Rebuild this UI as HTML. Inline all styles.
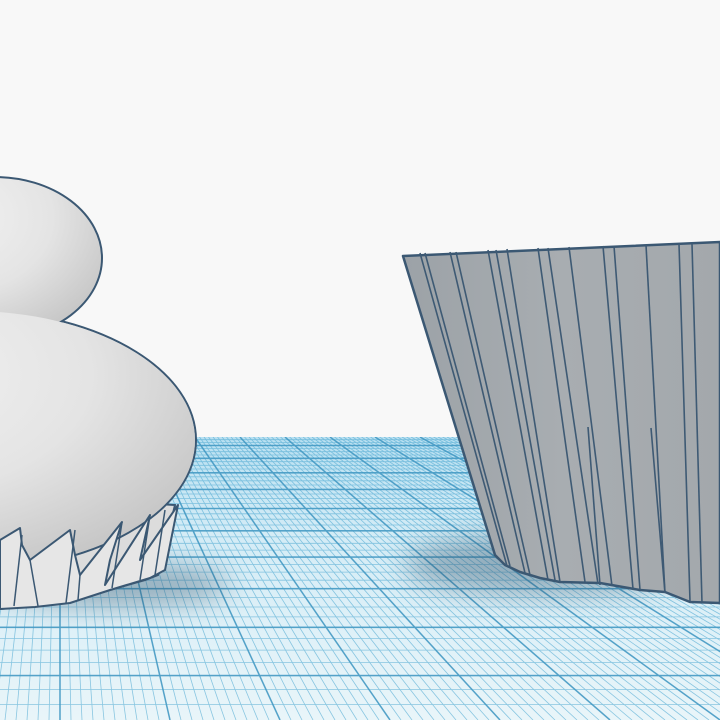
<!DOCTYPE html>
<html><head><style>
html,body{margin:0;padding:0;width:720px;height:720px;overflow:hidden;background:#f8f8f8}
svg{display:block}
</style></head><body>
<svg width="720" height="720" viewBox="0 0 720 720" xmlns="http://www.w3.org/2000/svg">
<defs>
<linearGradient id="floor" x1="0" y1="0" x2="0" y2="1">
<stop offset="0" stop-color="#b9e0f1"/><stop offset="0.35" stop-color="#d4ecf6"/><stop offset="1" stop-color="#e9f5f9"/>
</linearGradient>
<radialGradient id="ballA" cx="0.3" cy="0.25" r="0.85">
<stop offset="0" stop-color="#f2f2f2"/><stop offset="0.55" stop-color="#e4e4e4"/><stop offset="1" stop-color="#c4c4c4"/>
</radialGradient>
<linearGradient id="cup" x1="0" y1="0" x2="1" y2="0">
<stop offset="0" stop-color="#9ca2a7"/><stop offset="0.5" stop-color="#a8adb1"/><stop offset="1" stop-color="#a3a8ac"/>
</linearGradient>
<filter id="blur" x="-50%" y="-50%" width="200%" height="200%"><feGaussianBlur stdDeviation="14"/></filter>
<clipPath id="fc"><rect x="0" y="437" width="720" height="283"/></clipPath>
</defs>
<rect width="720" height="720" fill="#f8f8f8"/>
<rect x="0" y="437" width="720" height="283" fill="url(#floor)"/>
<g clip-path="url(#fc)" fill="none" stroke="#4aa6d0">
<path stroke-width="0.8" stroke-opacity="0.6" d="M0 720.6H720M0 704.6H720M0 689.6H720M0 675.6H720M0 662.5H720M0 650.1H720M0 638.4H720M0 627.3H720M0 616.9H720M0 607H720M0 597.6H720M0 588.7H720M0 580.2H720M0 572.1H720M0 564.4H720M0 557.1H720M0 550.1H720M0 543.3H720M0 536.9H720M0 530.8H720M0 525H720M0 519.2H720M0 513.8H720M0 508.5H720M0 503.5H720M0 498.6H720M0 494H720M0 489.4H720M0 485H720M0 480.8H720M0 476.8H720M0 472.8H720M0 469H720M0 465.3H720M0 461.7H720M0 458.3H720M0 455H720M0 451.7H720M0 448.6H720M0 445.5H720M0 442.6H720M0 439.7H720
M1.5 437L-83 720M6 437L-72 720M10.5 437L-61 720M15 437L-50 720M19.5 437L-39 720M24 437L-28 720M28.5 437L-17 720M33 437L-6 720M37.5 437L5 720M42 437L16 720M46.5 437L27 720M51 437L38 720M55.5 437L49 720M60 437L60 720
M64.5 437L71 720M69 437L82 720M73.5 437L93 720M78 437L104 720M82.5 437L115 720M87 437L126 720M91.5 437L137 720M96 437L148 720M100.5 437L159 720M105 437L170 720M109.5 437L181 720M114 437L192 720M118.5 437L203 720M123 437L214 720M127.5 437L225 720M132 437L236 720M136.5 437L247 720M141 437L258 720M145.5 437L269 720M150 437L280 720M154.5 437L291 720M159 437L302 720M163.5 437L313 720M168 437L324 720M172.5 437L335 720M177 437L346 720M181.5 437L357 720M186 437L368 720M190.5 437L379 720M195 437L390 720M199.5 437L401 720M204 437L412 720M208.5 437L423 720M213 437L434 720M217.5 437L445 720M222 437L456 720M226.5 437L467 720M231 437L478 720M235.5 437L489 720M240 437L500 720M244.5 437L511 720M249 437L522 720M253.5 437L533 720M258 437L544 720M262.5 437L555 720M267 437L566 720M271.5 437L577 720M276 437L588 720M280.5 437L599 720M285 437L610 720M289.5 437L621 720M294 437L632 720M298.5 437L643 720M303 437L654 720M307.5 437L665 720M312 437L676 720M316.5 437L687 720M321 437L698 720M325.5 437L709 720M330 437L720 720M334.5 437L731 720M339 437L742 720M343.5 437L753 720M348 437L764 720M352.5 437L775 720M357 437L786 720M361.5 437L797 720M366 437L808 720M370.5 437L819 720M375 437L830 720M379.5 437L841 720M384 437L852 720M388.5 437L863 720M393 437L874 720M397.5 437L885 720M402 437L896 720M406.5 437L907 720M411 437L918 720M415.5 437L929 720M420 437L940 720M424.5 437L951 720M429 437L962 720M433.5 437L973 720M438 437L984 720M442.5 437L995 720M447 437L1006 720M451.5 437L1017 720M456 437L1028 720M460.5 437L1039 720M465 437L1050 720M469.5 437L1061 720M474 437L1072 720M478.5 437L1083 720M483 437L1094 720M487.5 437L1105 720M492 437L1116 720M496.5 437L1127 720M501 437L1138 720M505.5 437L1149 720M510 437L1160 720M514.5 437L1171 720M519 437L1182 720M523.5 437L1193 720M528 437L1204 720M532.5 437L1215 720M537 437L1226 720M541.5 437L1237 720M546 437L1248 720M550.5 437L1259 720M555 437L1270 720M559.5 437L1281 720M564 437L1292 720M568.5 437L1303 720M573 437L1314 720M577.5 437L1325 720M582 437L1336 720M586.5 437L1347 720M591 437L1358 720M595.5 437L1369 720M600 437L1380 720M604.5 437L1391 720M609 437L1402 720M613.5 437L1413 720M618 437L1424 720M622.5 437L1435 720M627 437L1446 720M631.5 437L1457 720M636 437L1468 720M640.5 437L1479 720M645 437L1490 720M649.5 437L1501 720M654 437L1512 720M658.5 437L1523 720M663 437L1534 720M667.5 437L1545 720M672 437L1556 720M676.5 437L1567 720M681 437L1578 720M685.5 437L1589 720M690 437L1600 720M694.5 437L1611 720M699 437L1622 720M703.5 437L1633 720M708 437L1644 720M712.5 437L1655 720M717 437L1666 720M721.5 437L1677 720"/>
<path stroke-width="1.6" stroke-opacity="0.75" stroke="#3b93bf" d="M0 675.6H720M0 627.3H720M0 588.7H720M0 557.1H720M0 530.8H720M0 508.5H720M0 489.4H720M0 472.8H720M0 458.3H720M0 445.5H720
M15 437L-50 720M60 437L60 720M105 437L170 720M150 437L280 720M195 437L390 720M240 437L500 720M285 437L610 720M330 437L720 720M375 437L830 720M420 437L940 720M465 437L1050 720M510 437L1160 720M555 437L1270 720M600 437L1380 720M645 437L1490 720M690 437L1600 720"/>
</g>
<ellipse cx="110" cy="585" rx="120" ry="22" fill="#2a4e66" opacity="0.4" filter="url(#blur)"/>
<ellipse cx="545" cy="565" rx="140" ry="30" fill="#2a4e66" opacity="0.4" filter="url(#blur)"/>
<!-- right cup -->
<path d="M403,256 L720,242 L720,603 L690,602 L665,592 L640,590 L600,583 L560,582 L540,578 L520,572 L505,565 L495,555 Z" fill="url(#cup)" stroke="#3b5873" stroke-width="2.5" stroke-linejoin="round"/>
<g stroke="#3e5a74" stroke-width="1.6" fill="none">
<path d="M420,253 L507,566"/><path d="M425,253 L510,566"/>
<path d="M450,252 L525,573"/><path d="M456,252 L530,575"/>
<path d="M488,250 L548,580"/><path d="M496,250 L555,580"/>
<path d="M507,249 L560,582"/><path d="M538,248 L585,582"/>
<path d="M548,248 L598,584"/><path d="M569,247 L612,586"/>
<path d="M603,246 L633,589"/><path d="M614,246 L640,590"/>
<path d="M646,245 L665,593"/><path d="M679,244 L690,601"/>
<path d="M692,244 L702,603"/><path d="M588,427 L600,585"/><path d="M651,428 L665,593"/>
</g>
<!-- left cupcake -->
<path d="M0,495 L175,505 L158,575 L145,580 L110,590 L70,602 L40,605 L0,609 Z" fill="#dcdcdc" stroke="#3b5873" stroke-width="2"/>
<ellipse cx="-30" cy="440" rx="226" ry="130" fill="url(#ballA)" stroke="#3b5873" stroke-width="2"/>
<ellipse cx="-5" cy="258" rx="107" ry="81" fill="url(#ballA)" stroke="#3b5873" stroke-width="2"/>
<ellipse cx="-30" cy="440" rx="225" ry="129" fill="url(#ballA)"/>
<path d="M0,540 L20,528 L22,545 L30,560 L70,530 L75,555 L80,575 L122,522 L110,560 L105,585 L150,515 L140,560 L178,505 L165,570 L150,578 L110,590 L70,603 L35,607 L0,609 Z" fill="#e6e6e6" stroke="#3b5873" stroke-width="2" stroke-linejoin="round"/>
<g stroke="#3b5873" stroke-width="1.5" fill="none">
<path d="M22,535 L14,606"/><path d="M30,560 L38,606"/><path d="M75,530 L66,603"/><path d="M80,575 L78,600"/>
<path d="M122,522 L112,588"/><path d="M150,515 L140,580"/><path d="M165,510 L155,575"/>
</g>
</svg>
</body></html>
